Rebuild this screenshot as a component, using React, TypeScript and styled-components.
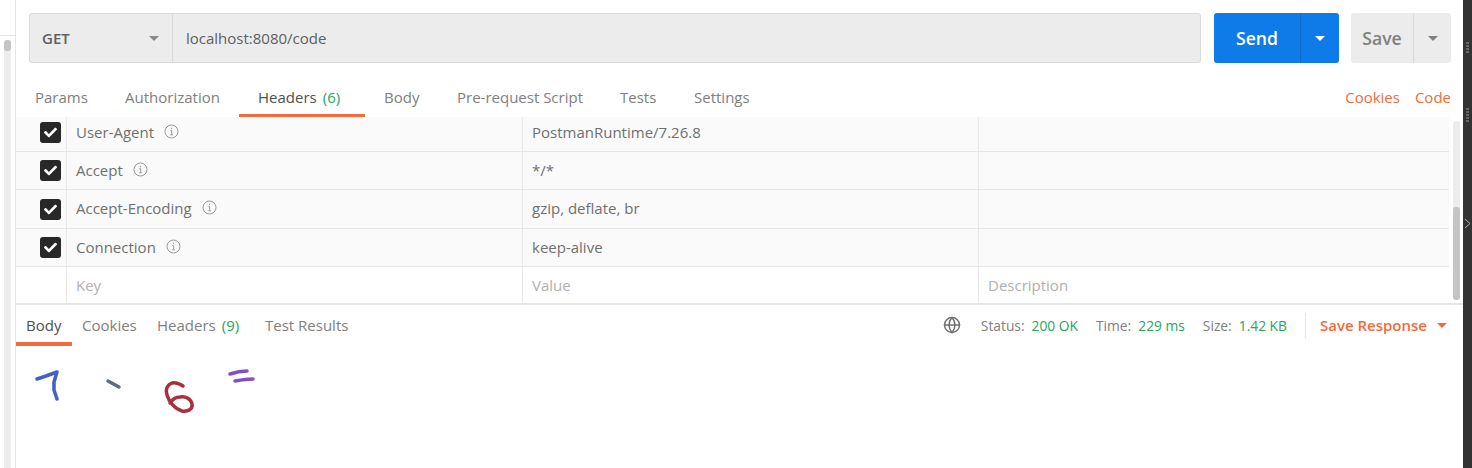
import React from 'react'
import styled, { createGlobalStyle } from 'styled-components'
import { FaCheck } from 'react-icons/fa'
import { FiGlobe } from 'react-icons/fi'

const GlobalStyle = createGlobalStyle`
  html, body {
    margin: 0;
    padding: 0;
    background: #fff;
    overflow: hidden;
  }
  * { box-sizing: border-box; }
`

const Page = styled.div`
  display: flex;
  width: 1472px;
  height: 468px;
  font-family: "Open Sans", sans-serif;
  font-size: 15px;
  color: #808080;
  overflow: hidden;
`

const LeftRail = styled.div`
  width: 16px;
  flex: none;
  border-right: 1px solid #e6e6e6;
  display: flex;
  flex-direction: column;
`

const LeftRailTop = styled.div`
  height: 36px;
  flex: none;
  border-bottom: 1px solid #e6e6e6;
`

const LeftTrack = styled.div`
  width: 7px;
  margin: 4px 0 0 4px;
  flex: 1;
  background: #ececec;
  border-radius: 3px 3px 0 0;
`

const LeftThumb = styled.div`
  height: 11px;
  background: #c4c4c4;
  border-radius: 3px;
`

const Main = styled.div`
  flex: 1;
  min-width: 0;
  display: flex;
  flex-direction: column;
`

const RightRail = styled.div`
  width: 9px;
  flex: none;
  background: #333333;
  display: flex;
  flex-direction: column;
  align-items: center;
  padding-top: 42px;
`

const RailMark = styled.svg<{ $gap: number }>`
  display: block;
  margin-bottom: ${p => p.$gap}px;
`

const UrlRow = styled.div`
  display: flex;
  height: 50px;
  margin: 13px 0 0 13px;
`

const UrlBox = styled.div`
  width: 1172px;
  display: flex;
  background: #ececec;
  border: 1px solid #d9d9d9;
  border-radius: 3px;
`

const MethodSelect = styled.div`
  width: 143px;
  flex: none;
  display: flex;
  align-items: center;
  justify-content: space-between;
  padding: 0 13px 0 12px;
  border-right: 1px solid #d9d9d9;
  font-weight: 600;
  color: #606060;
`

const UrlText = styled.div`
  display: flex;
  align-items: center;
  padding-left: 13px;
  color: #606060;
`

const Caret = styled.span<{ $color: string }>`
  display: block;
  width: 0;
  height: 0;
  border-left: 5px solid transparent;
  border-right: 5px solid transparent;
  border-top: 5px solid ${p => p.$color};
`

const SplitButton = styled.div<{ $bg: string; $width: number; $left: number }>`
  display: flex;
  width: ${p => p.$width}px;
  margin-left: ${p => p.$left}px;
  background: ${p => p.$bg};
  border-radius: 3px;
`

const ButtonLabel = styled.div<{ $color: string; $width: number }>`
  width: ${p => p.$width}px;
  flex: none;
  display: flex;
  align-items: center;
  justify-content: center;
  font-size: 17.6px;
  font-weight: 600;
  color: ${p => p.$color};
`

const ButtonCaret = styled.div<{ $divider: string }>`
  flex: 1;
  display: flex;
  align-items: center;
  justify-content: center;
  border-left: 1px solid ${p => p.$divider};
`

const TabRow = styled.div`
  height: 54px;
  display: flex;
  align-items: flex-end;
  padding-right: 12px;
`

const Tab = styled.div<{ $active?: boolean; $width: number }>`
  width: ${p => p.$width}px;
  height: 34px;
  flex: none;
  display: flex;
  gap: 6px;
  padding: 4px 0 0 19px;
  white-space: nowrap;
  color: ${p => (p.$active ? '#505050' : '#808080')};
  border-bottom: 3px solid ${p => (p.$active ? '#f26b3a' : 'transparent')};
`

const Count = styled.span`
  color: #26a55c;
`

const TabLinks = styled.div`
  margin-left: auto;
  height: 34px;
  display: flex;
  gap: 15px;
  padding-top: 4px;
  color: #f26b3a;
`

const Editor = styled.div`
  height: 188px;
  flex: none;
  display: flex;
  border-bottom: 2px solid #e6e6e6;
`

const HeaderTable = styled.div`
  width: 1433px;
  flex: none;
  display: flex;
  flex-direction: column;
`

const Row = styled.div<{ $height: number; $blank?: boolean }>`
  height: ${p => p.$height}px;
  flex: none;
  display: grid;
  grid-template-columns: 50px 456px 456px 1fr;
  background: ${p => (p.$blank ? '#fff' : '#fafafa')};
  border-bottom: ${p => (p.$blank ? 'none' : '1px solid #e6e6e6')};
`

const CheckCell = styled.div<{ $lift: number }>`
  display: flex;
  align-items: center;
  justify-content: center;
  padding: 0 5px ${p => p.$lift}px 24px;
`

const CheckBox = styled.div`
  width: 21px;
  height: 21px;
  flex: none;
  border-radius: 3px;
  background: #282828;
  color: #fff;
  display: flex;
  align-items: center;
  justify-content: center;
  font-size: 13px;
`

const Cell = styled.div<{ $muted?: boolean; $lift?: number }>`
  display: flex;
  align-items: center;
  gap: 10px;
  padding: 0 0 ${p => p.$lift ?? 0}px 9px;
  border-left: 1px solid #e6e6e6;
  color: ${p => (p.$muted ? '#b0b0b0' : '#707070')};
`

const InfoIcon = styled.svg`
  display: block;
  margin-top: -1px;
`

const ScrollCol = styled.div`
  flex: 1;
  padding: 4px 3px 3px 4px;
`

const ScrollTrack = styled.div`
  width: 7px;
  height: 100%;
  background: #ececec;
  border-radius: 3px;
  display: flex;
  flex-direction: column;
  justify-content: flex-end;
`

const ScrollThumb = styled.div`
  height: 93px;
  background: #c4c4c4;
  border-radius: 3px;
`

const ResponseBar = styled.div`
  height: 41px;
  flex: none;
  display: flex;
  align-items: stretch;
  padding-right: 16px;
`

const ResponseTab = styled.div<{ $active?: boolean; $width: number }>`
  width: ${p => p.$width}px;
  flex: none;
  display: flex;
  gap: 6px;
  padding: 10px 0 0 10px;
  white-space: nowrap;
  color: ${p => (p.$active ? '#505050' : '#808080')};
  border-bottom: 4px solid ${p => (p.$active ? '#f26b3a' : 'transparent')};
`

const Meta = styled.div`
  margin-left: auto;
  display: flex;
  align-items: center;
  padding-bottom: 1px;
  white-space: nowrap;
  font-size: 13.8px;
`

const Globe = styled(FiGlobe)`
  color: #707070;
  font-size: 18px;
  margin-right: 20px;
`

const StatLabel = styled.span<{ $left?: number }>`
  margin-left: ${p => p.$left ?? 0}px;
  margin-right: 7px;
`

const StatValue = styled.span`
  color: #26a55c;
`

const SaveResponse = styled.div`
  height: 25px;
  display: flex;
  align-items: center;
  gap: 10px;
  margin-left: 18px;
  padding-left: 14px;
  border-left: 1px solid #e6e6e6;
  color: #f26b3a;
  font-size: 15px;
  font-weight: 600;
`

const ResponseBody = styled.div`
  flex: 1;
`

const Sketch = styled.svg`
  display: block;
`

const rows = [
  { key: 'User-Agent', value: 'PostmanRuntime/7.26.8', height: 35, lift: 4, checkLift: 4 },
  { key: 'Accept', value: '*/*', height: 38, lift: 2, checkLift: 0 },
  { key: 'Accept-Encoding', value: 'gzip, deflate, br', height: 39, lift: 3, checkLift: 0 },
  { key: 'Connection', value: 'keep-alive', height: 38, lift: 2, checkLift: 0 },
]

const Info = () => (
  <InfoIcon width="15" height="15" viewBox="0 0 15 15" fill="none" stroke="#9a9a9a">
    <circle cx="7.5" cy="7.5" r="6.5" />
    <path d="M6.3 6.6h1.4v4M6.2 10.8h2.8M7.5 3.8v1.4" />
  </InfoIcon>
)

const App: React.FC = () => {
  return (
    <Page>
      <GlobalStyle />
      <LeftRail>
        <LeftRailTop />
        <LeftTrack>
          <LeftThumb />
        </LeftTrack>
      </LeftRail>
      <Main>
        <UrlRow>
          <UrlBox>
            <MethodSelect>
              GET
              <Caret $color="#8a8a8a" />
            </MethodSelect>
            <UrlText>localhost:8080/code</UrlText>
          </UrlBox>
          <SplitButton $bg="#0f7be8" $width={125} $left={13}>
            <ButtonLabel $color="#fff" $width={86}>Send</ButtonLabel>
            <ButtonCaret $divider="#0c6bcc">
              <Caret $color="#fff" />
            </ButtonCaret>
          </SplitButton>
          <SplitButton $bg="#ececec" $width={100} $left={12}>
            <ButtonLabel $color="#808080" $width={62}>Save</ButtonLabel>
            <ButtonCaret $divider="#d9d9d9">
              <Caret $color="#808080" />
            </ButtonCaret>
          </SplitButton>
        </UrlRow>
        <TabRow>
          <Tab $width={90}>Params</Tab>
          <Tab $width={133}>Authorization</Tab>
          <Tab $width={126} $active>
            Headers <Count>(6)</Count>
          </Tab>
          <Tab $width={73}>Body</Tab>
          <Tab $width={163}>Pre-request Script</Tab>
          <Tab $width={74}>Tests</Tab>
          <Tab $width={90}>Settings</Tab>
          <TabLinks>
            <span>Cookies</span>
            <span>Code</span>
          </TabLinks>
        </TabRow>
        <Editor>
          <HeaderTable>
            {rows.map(row => (
              <Row key={row.key} $height={row.height}>
                <CheckCell $lift={row.checkLift}>
                  <CheckBox>
                    <FaCheck />
                  </CheckBox>
                </CheckCell>
                <Cell $lift={row.lift}>
                  {row.key}
                  <Info />
                </Cell>
                <Cell $lift={row.lift}>{row.value}</Cell>
                <Cell />
              </Row>
            ))}
            <Row $height={36} $blank>
              <div />
              <Cell $muted>Key</Cell>
              <Cell $muted>Value</Cell>
              <Cell $muted>Description</Cell>
            </Row>
          </HeaderTable>
          <ScrollCol>
            <ScrollTrack>
              <ScrollThumb />
            </ScrollTrack>
          </ScrollCol>
        </Editor>
        <ResponseBar>
          <ResponseTab $width={56} $active>Body</ResponseTab>
          <ResponseTab $width={75}>Cookies</ResponseTab>
          <ResponseTab $width={108}>
            Headers <Count>(9)</Count>
          </ResponseTab>
          <ResponseTab $width={108}>Test Results</ResponseTab>
          <Meta>
            <Globe />
            <StatLabel>Status:</StatLabel>
            <StatValue>200 OK</StatValue>
            <StatLabel $left={18}>Time:</StatLabel>
            <StatValue>229 ms</StatValue>
            <StatLabel $left={18}>Size:</StatLabel>
            <StatValue>1.42 KB</StatValue>
            <SaveResponse>
              Save Response
              <Caret $color="#f26b3a" />
            </SaveResponse>
          </Meta>
        </ResponseBar>
        <ResponseBody>
          <Sketch width="260" height="80" viewBox="16 346 260 80" fill="none" strokeLinecap="round" strokeLinejoin="round">
            <path d="M37 379 L46 376 L57 372 M57 372 L54 382 L54 390 L57 399" stroke="#4360c8" strokeWidth="3.5" />
            <path d="M108 381 L119 387" stroke="#616b7c" strokeWidth="3.5" />
            <path d="M183 386 C180 384 176 382 172 383 C167 385 165 390 167 395 C169 402 175 409 182 411 C188 412 193 409 192 404 C191 399 186 396 180 397 C175 397 172 400 170 403" stroke="#a8303f" strokeWidth="3.5" />
            <path d="M230 374 C236 372 242 371 247 371 M235 381 C241 380 247 379 253 379" stroke="#8350c4" strokeWidth="3.5" />
          </Sketch>
        </ResponseBody>
      </Main>
      <RightRail>
        <RailMark $gap={54} width="5" height="12" viewBox="0 0 5 12" stroke="#9a9a9a" fill="none">
          <path d="M1 1h3M1 4h3M1 7h3M1 10h3" />
        </RailMark>
        <RailMark $gap={96} width="5" height="14" viewBox="0 0 5 14" stroke="#9a9a9a" fill="none">
          <path d="M1 1h3M1 4h3M1 7h3M1 10h3M1 13h3" />
        </RailMark>
        <RailMark $gap={0} width="7" height="11" viewBox="0 0 7 11" stroke="#b0b0b0" fill="none">
          <path d="M1 1L6 5.5L1 10" />
        </RailMark>
      </RightRail>
    </Page>
  )
}

export default App
